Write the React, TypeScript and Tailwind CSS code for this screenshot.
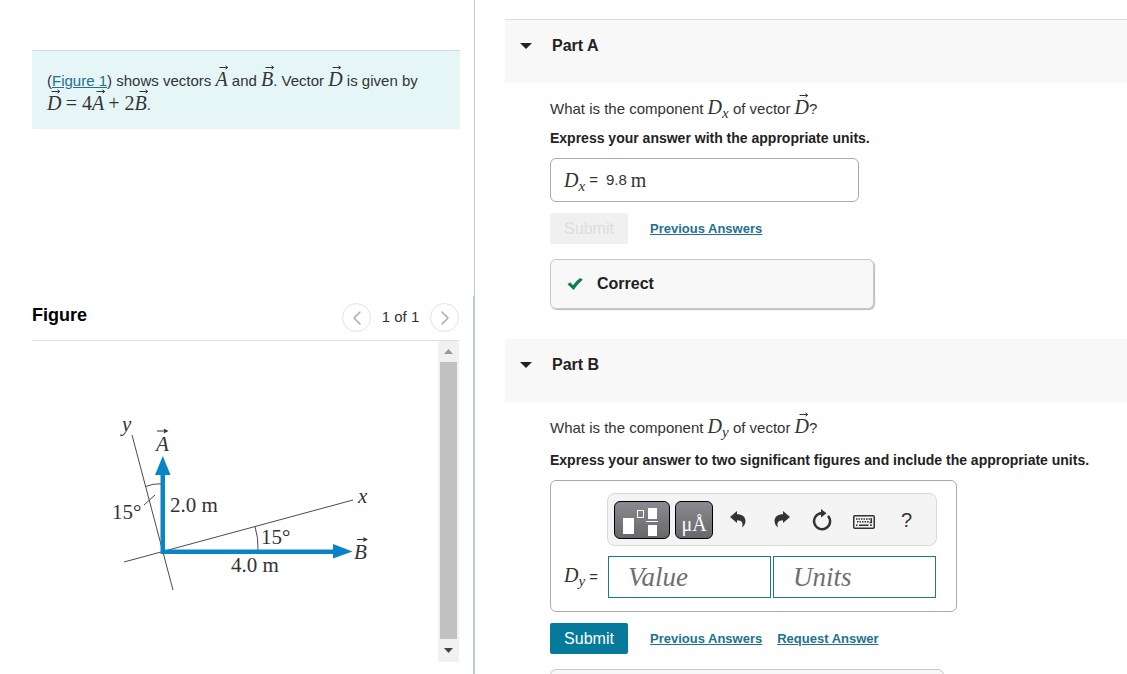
import type { ReactNode } from "react";
import { ChevronLeft, ChevronRight } from "lucide-react";
import { clsx } from "clsx";

const VectorSymbol = ({ name }: { name: string }) => (
  <span className="relative inline-block font-['Liberation_Serif',serif] text-xl leading-none italic">
    {name}
    <svg aria-hidden="true" className="absolute -top-1 left-1 h-[5px] w-[10px]" fill="none" stroke="currentColor" viewBox="0 0 10 5">
      <path d="M0.5 2.5H8.5M6.5 0.8L8.7 2.5L6.5 4.2" strokeWidth="1" />
    </svg>
  </span>
);

const Component = ({ axis }: { axis: string }) => (
  <span className="font-['Liberation_Serif',serif] text-xl leading-none italic">
    D<sub className="text-[15px] leading-none">{axis}</sub>
  </span>
);

const MathText = ({ children }: { children: ReactNode }) => (
  <span className="font-['Liberation_Serif',serif] text-xl leading-none">{children}</span>
);

const VectorFigure = () => (
  <svg aria-label="Vectors A and B with rotated x and y axes" className="h-[200px] w-[300px]" role="img" viewBox="0 0 300 200">
    <g fill="none" stroke="#4a4a4a" strokeWidth="1">
      <path d="M42 35L83 190" />
      <path d="M34 162L263 100" />
      <path d="M55.500 86.500Q63 83.500 71 83.800" />
      <path d="M54 105L65 95" />
      <path d="M165 126.500Q168.500 138 168 150" />
    </g>
    <g fill="#0a84c6">
      <path d="M70.500 154V75H65L72.800 56L80.500 75H75V149.500H243V144L262.500 151.500L243 158.500V154Z" />
    </g>
    <g fill="none" stroke="#2f2f2f" strokeWidth="1">
      <path d="M67 31H77" />
      <path d="M267 139.500H276" />
    </g>
    <g fill="#2f2f2f">
      <path d="M78.500 31L73.500 28.500L74.500 31L73.500 33.500Z" />
      <path d="M278 139.500L273 137L274 139.500L273 142Z" />
    </g>
    <g className="font-['Liberation_Serif',serif] text-[21px]" fill="#333">
      <text fontStyle="italic" x="32" y="31">y</text>
      <text fontStyle="italic" x="66" y="51">A</text>
      <text fontStyle="italic" x="268" y="103">x</text>
      <text fontStyle="italic" x="264" y="159">B</text>
      <text x="80" y="112">2.0 m</text>
      <text x="22" y="119">15°</text>
      <text x="171" y="144">15°</text>
      <text x="141" y="172">4.0 m</text>
    </g>
  </svg>
);

const CheckIcon = () => (
  <svg aria-hidden="true" className="mr-[14px] h-3 w-4" fill="#0c8045" viewBox="0 0 16 12">
    <path d="M0.500 6.200L3.200 4.200L6 7.200Q9 2.800 13.200 0L15.800 1.700Q10.500 5.800 6.600 12Z" />
  </svg>
);

const UndoIcon = ({ className }: { className?: string }) => (
  <svg aria-hidden="true" className={clsx("h-[17px] w-4", className)} fill="currentColor" viewBox="0 0 16 17">
    <path d="M0 6L7 0V3.300C12 3.300 15.500 6 15.500 10C15.500 12.500 14 15 12 16.500C13.500 12 12 9.200 7 9.200V12Z" />
  </svg>
);

const ResetIcon = () => (
  <svg aria-hidden="true" className="h-[22px] w-5" fill="none" stroke="currentColor" viewBox="0 0 20 22">
    <path d="M9.500 4.200A8 8 0 1 0 16 6.800" strokeWidth="2.500" />
    <path d="M9 0L14.500 4.300L9 8.500Z" fill="currentColor" stroke="none" />
  </svg>
);

const KeyboardIcon = () => (
  <svg aria-hidden="true" className="h-[14px] w-[22px]" fill="none" stroke="currentColor" viewBox="0 0 22 14">
    <rect height="12.500" rx="1" strokeWidth="1.500" width="20.500" x="0.750" y="0.750" />
    <path d="M3 4H17M4 6.800H16" strokeDasharray="1.500 1" strokeWidth="1.500" />
    <path d="M18.300 3V7.500H16.500" strokeWidth="1.500" />
    <path d="M3 10.200H4.500M6 10.200H15.500M17 10.200H18.800" strokeWidth="1.500" />
  </svg>
);

const TemplateIcon = () => (
  <svg aria-hidden="true" className="h-9 w-[54px]" fill="#fff" viewBox="1 1 54 36">
    <rect height="16" width="11" x="9" y="17" />
    <rect fill="none" height="7" stroke="#fff" width="6" x="23.500" y="9.500" />
    <rect height="11" width="9" x="34" y="7" />
    <rect height="1" width="12" x="32" y="20" />
    <rect height="11" width="9" x="34" y="24" />
  </svg>
);

const PartHeader = ({ title, className }: { title: string; className?: string }) => (
  <h2 className={clsx("bg-[#f8f8f8] pt-[14px] pb-[25px] pl-[15px]", className)}>
    <button aria-expanded="true" className="flex items-center text-base leading-6 font-bold text-[#222]" type="button">
      <svg aria-hidden="true" className="mr-5 h-[6px] w-3" fill="currentColor" viewBox="0 0 12 6">
        <path d="M0 0H12L6 6Z" />
      </svg>
      {title}
    </button>
  </h2>
);

const TextLink = ({ children }: { children: ReactNode }) => (
  <a className="text-[13px] font-bold text-[#21728f] underline" href="#">{children}</a>
);

const roundButton = "flex size-[29px] items-center justify-center rounded-full border border-[#e2e2e2] text-[#aaa]";
const toolbarButton = "flex h-[38px] items-center justify-center rounded-md border border-black bg-linear-to-b from-[#8a8a90] to-[#68686c] text-white";
const answerInput = "h-[42px] min-w-0 flex-1 border border-[#1b7a8c] bg-white px-[19px] font-['Liberation_Serif',serif] text-[27px] italic placeholder:text-[#6e6e6e]";

export default function App() {
  return (
    <div className="grid h-screen grid-cols-[475fr_652fr] overflow-hidden bg-white font-['Liberation_Sans',Arial,sans-serif] text-[15px] text-[#333]">
      <aside className="flex min-w-0">
        <div className="flex min-w-0 flex-1 flex-col pt-[50px] pr-[13px] pl-8">
          <div className="h-[79px] border-t border-[#c9dcdf] bg-[#e6f6f7] pt-[18px] pl-[15px] leading-6">
            <p>
              (<a className="text-[#21728f] underline" href="#figure">Figure 1</a>) shows vectors <VectorSymbol name="A" /> and <VectorSymbol name="B" />. Vector <VectorSymbol name="D" /> is given by
              <br />
              <VectorSymbol name="D" /> <MathText>= 4</MathText><VectorSymbol name="A" /> <MathText>+ 2</MathText><VectorSymbol name="B" />.
            </p>
          </div>

          <section className="mt-[174px] mr-px flex flex-col" id="figure">
            <header className="flex h-[38px] items-start justify-between border-b border-[#ddd]">
              <h2 className="text-lg leading-6 font-bold text-black">Figure</h2>
              <div className="flex items-center">
                <button aria-label="Previous figure" className={roundButton} type="button">
                  <ChevronLeft className="shrink-0" size={24} strokeWidth={1.5} />
                </button>
                <span className="w-[59px] text-center">1 of 1</span>
                <button aria-label="Next figure" className={roundButton} type="button">
                  <ChevronRight className="shrink-0" size={24} strokeWidth={1.5} />
                </button>
              </div>
            </header>

            <div className="flex h-[321px] justify-between">
              <div className="min-w-0 pt-[59px] pl-[58px]">
                <VectorFigure />
              </div>
              <div className="flex w-[21px] shrink-0 flex-col items-center bg-[#f1f1f1]">
                <button aria-label="Scroll up" className="flex h-[21px] w-full items-center justify-center text-[#999]" type="button">
                  <svg aria-hidden="true" className="h-[5px] w-[9px]" fill="currentColor" viewBox="0 0 9 5"><path d="M0 5L4.500 0L9 5Z" /></svg>
                </button>
                <div className="w-[17px] flex-1 bg-[#c1c1c1]" />
                <button aria-label="Scroll down" className="flex h-[23px] w-full items-center justify-center text-[#444]" type="button">
                  <svg aria-hidden="true" className="h-[5px] w-[9px]" fill="currentColor" viewBox="0 0 9 5"><path d="M0 0L4.500 5L9 0Z" /></svg>
                </button>
              </div>
            </div>
          </section>
        </div>

        {/* Pane divider */}
        <div className="flex w-[2px] shrink-0 flex-col items-end">
          <div className="h-[296px] w-px bg-[#bccdd0]" />
          <div className="w-[2px] flex-1 bg-[#b9cdd2]" />
        </div>
      </aside>

      <main className="min-w-0 pt-[19px] pl-[30px]">
        <section>
          <PartHeader className="border-t border-[#ddd]" title="Part A" />
          <div className="pl-[45px]">
            <p className="pt-[14px] leading-6">
              What is the component <Component axis="x" /> of vector <VectorSymbol name="D" />?
            </p>
            <p className="mt-[5px] text-sm leading-6 font-bold text-[#222]">Express your answer with the appropriate units.</p>
            <div className="mt-2 flex h-11 max-w-[309px] items-center gap-1 rounded-md border border-[#aaa] pl-[13px]">
              <Component axis="x" />
              <span>=</span>
              <span className="ml-1">9.8</span>
              <MathText>m</MathText>
            </div>
            <div className="mt-[11px] flex items-center">
              <button className="mr-[22px] h-[31px] w-[78px] rounded-xs bg-[#f0f0f0] text-base text-[#ddd]" disabled type="button">Submit</button>
              <TextLink>Previous Answers</TextLink>
            </div>
            <div className="mt-[15px] flex h-[50px] max-w-[324px] items-center rounded-md border border-[#c8c8c8] bg-[#f8f8f8] pl-4 shadow-[1px_1px_1px_#bbb]">
              <CheckIcon />
              <strong className="text-base leading-5 text-[#222]">Correct</strong>
            </div>
          </div>
        </section>

        <section className="mt-[30px]">
          <PartHeader title="Part B" />
          <div className="pl-[45px]">
            <p className="pt-[14px] leading-6">
              What is the component <Component axis="y" /> of vector <VectorSymbol name="D" />?
            </p>
            <p className="mt-2 text-sm leading-6 font-bold whitespace-nowrap text-[#222]">Express your answer to two significant figures and include the appropriate units.</p>

            <div className="mt-2 max-w-[407px] rounded-md border border-[#aaa] pt-3 pr-[20px] pb-[13px] pl-[13px]">
              <div className="-mr-px ml-[43px] flex h-[53px] items-center rounded-lg border border-[#d8d8d8] bg-[#f4f4f4] pl-[6px] text-[#333]">
                <button aria-label="Templates" className={clsx(toolbarButton, "w-14")} type="button">
                  <TemplateIcon />
                </button>
                <button aria-label="Symbols" className={clsx(toolbarButton, "ml-[5px] w-[38px] pt-2 font-['Liberation_Serif',serif] text-xl leading-none")} type="button">μÅ</button>
                <button aria-label="Undo" className="ml-[17px]" type="button"><UndoIcon /></button>
                <button aria-label="Redo" className="ml-7" type="button"><UndoIcon className="-scale-x-100" /></button>
                <button aria-label="Reset" className="ml-[22px]" type="button"><ResetIcon /></button>
                <button aria-label="Keyboard shortcuts" className="ml-[21px] pt-1" type="button"><KeyboardIcon /></button>
                <button aria-label="Help" className="ml-[26px] text-xl leading-none" type="button">?</button>
              </div>
              <div className="mt-[10px] flex items-center">
                <label className="w-11 shrink-0 whitespace-nowrap" htmlFor="value">
                  <Component axis="y" /> =
                </label>
                <div className="flex min-w-0 flex-1 gap-[2px]">
                  <input className={answerInput} id="value" placeholder="Value" type="text" />
                  <input aria-label="Units" className={answerInput} placeholder="Units" type="text" />
                </div>
              </div>
            </div>

            <div className="mt-[11px] flex items-center">
              <button className="mr-[22px] h-[31px] w-[78px] rounded-xs bg-[#067a9b] text-base text-white" type="button">Submit</button>
              <TextLink>Previous Answers</TextLink>
              <span className="w-[15px]" />
              <TextLink>Request Answer</TextLink>
            </div>
            <div className="mt-[15px] h-12 max-w-[394px] rounded-md border border-[#c8c8c8] bg-[#f8f8f8]" />
          </div>
        </section>
      </main>
    </div>
  );
}
